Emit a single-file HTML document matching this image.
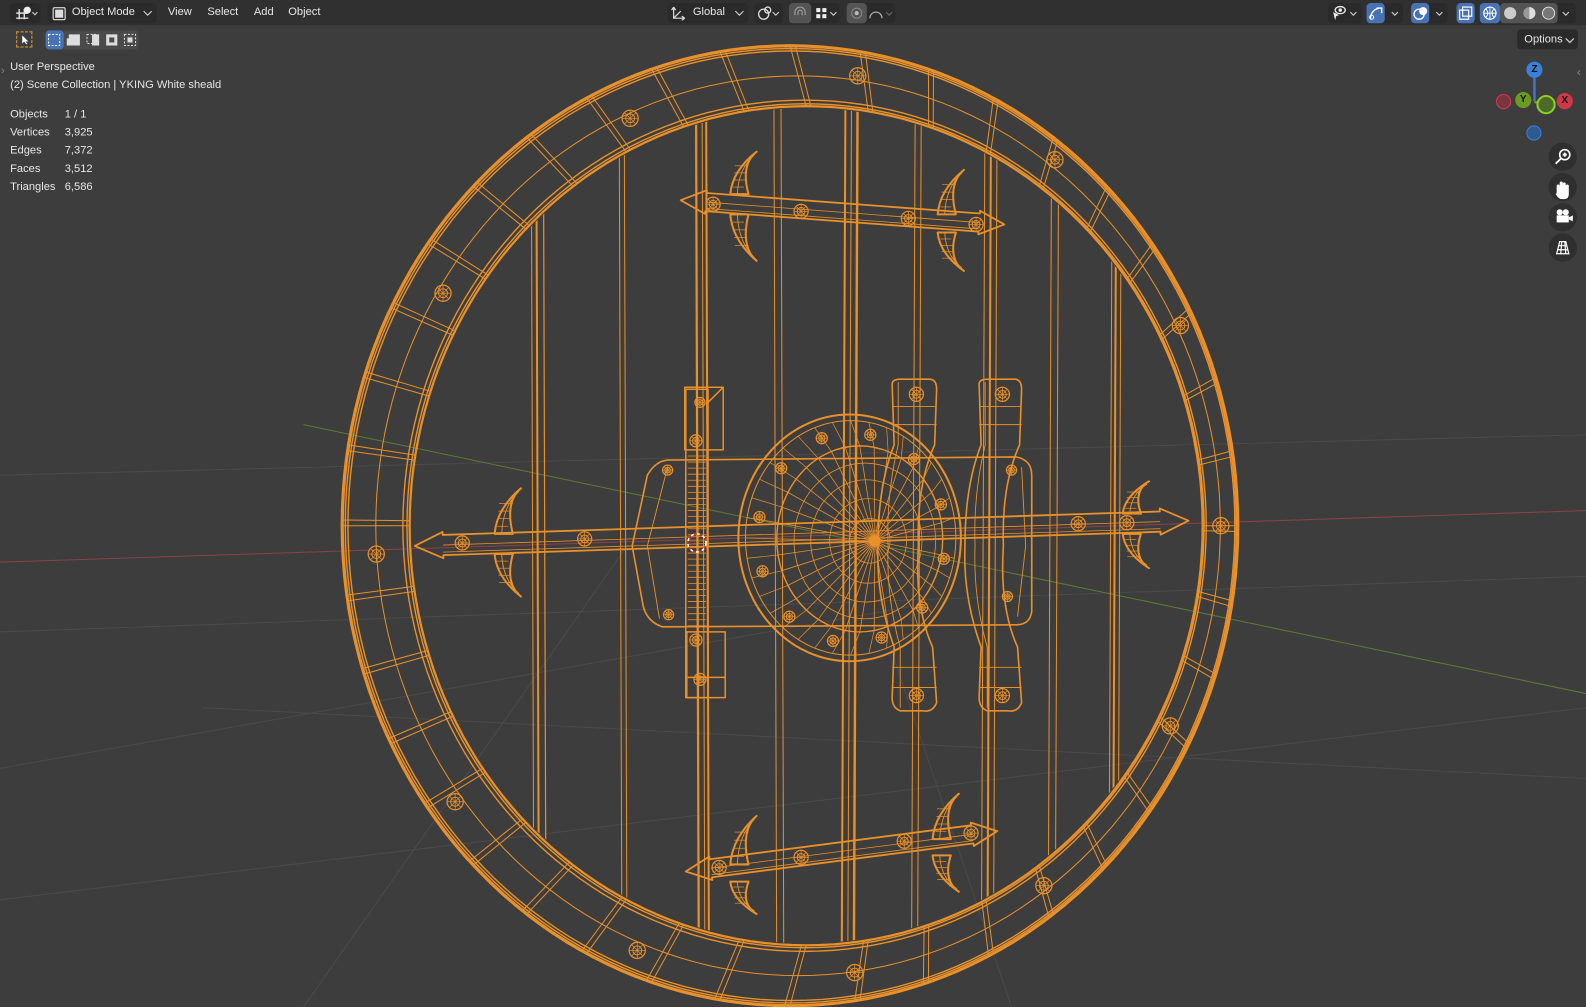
<!DOCTYPE html>
<html><head><meta charset="utf-8">
<style>
html,body{margin:0;padding:0;background:#3d3d3d;overflow:hidden;width:1586px;height:1007px}
#wrap{position:absolute;left:0;top:0;width:1568px;height:996px;transform:scale(1.01148,1.01104);transform-origin:0 0;background:#3d3d3d;font-family:"Liberation Sans","DejaVu Sans",sans-serif;font-size:11px;color:#e6e6e6}
#hdr{position:absolute;left:0;top:0;width:1568px;height:25px;background:#303030}
.t{position:absolute;white-space:nowrap}
.box{position:absolute;background:#2a2a2a;border-radius:4px;height:20px;top:3px}
.blue{background:#4772b3}
.gry{background:#545454}
.btn{position:absolute;border-radius:4px}
.nav{position:absolute;width:28px;height:28px;border-radius:50%;background:#2f2f2f;left:1531px}
.ball{position:absolute;border-radius:50%;text-align:center;font-size:10px;color:#111;font-weight:bold}
svg{position:absolute;left:0;top:0}
</style></head><body>
<div id="wrap">
<svg id="sv" width="1568" height="996" viewBox="0 0 1568 996">
<g id="grid" fill="none" stroke-width="1"></g>
<g id="shield" fill="none" stroke="#e8902a" stroke-width="1.5" stroke-linejoin="round"></g>
</svg>

<div id="hdr"></div>
<div class="box" style="left:10px;width:30px"></div>
<svg style="left:14px;top:5px" width="24" height="16" viewBox="0 0 24 16"><path d="M2 8h12M5 4v10M10 4v10M2 13h12" stroke="#ddd" stroke-width="1.4" fill="none"/><circle cx="13" cy="5" r="3.5" fill="#eee"/><path d="M18 7l2.5 2.5L23 7" stroke="#ccc" fill="none" stroke-width="1.2"/></svg>
<div class="box" style="left:47px;width:108px"></div>
<div style="position:absolute;left:52px;top:7px;width:11px;height:11px;border:1.5px solid #ddd;border-radius:2px;background:#ddd;box-shadow:inset 0 0 0 1.5px #2a2a2a"></div>
<div class="t" style="left:71px;top:6px">Object Mode</div>
<svg style="left:141px;top:9px" width="10" height="8"><path d="M1 2l4 4 4-4" stroke="#ccc" fill="none" stroke-width="1.2"/></svg>
<div class="t" style="left:166px;top:6px">View</div>
<div class="t" style="left:205px;top:6px">Select</div>
<div class="t" style="left:251px;top:6px">Add</div>
<div class="t" style="left:285px;top:6px">Object</div>
<div class="box" style="left:660px;width:80px"></div>
<svg style="left:663px;top:5px" width="16" height="16"><path d="M3 2v11h11M3 13l7-7M3 2l-2 3M3 2l2 3M14 13l-3-2M14 13l-3 2" stroke="#ddd" fill="none" stroke-width="1.2"/></svg>
<div class="t" style="left:685px;top:6px">Global</div>
<svg style="left:726px;top:9px" width="10" height="8"><path d="M1 2l4 4 4-4" stroke="#ccc" fill="none" stroke-width="1.2"/></svg>
<div class="box" style="left:746px;width:28px"></div>
<svg style="left:748px;top:5px" width="26" height="16"><circle cx="7" cy="9" r="5" stroke="#ddd" fill="none" stroke-width="1.3"/><circle cx="11" cy="5" r="3" stroke="#ddd" fill="none" stroke-width="1.3"/><path d="M16 7l3 3 3-3" stroke="#ccc" fill="none" stroke-width="1.2"/></svg>
<div class="box" style="left:780px;width:50px"></div>
<div class="btn gry" style="left:780px;top:3px;width:22px;height:20px"></div>
<svg style="left:782px;top:5px" width="48" height="16"><path d="M4 10V7a5 5 0 0 1 10 0v3M7 10V7a2 2 0 0 1 4 0v3" stroke="#999" fill="none" stroke-width="1.2"/><rect x="25" y="3" width="4" height="4" fill="#eee"/><rect x="31" y="3" width="4" height="4" fill="#eee"/><rect x="25" y="9" width="4" height="4" fill="#eee"/><rect x="31" y="9" width="4" height="4" fill="#eee"/><path d="M39 7l3 3 3-3" stroke="#ccc" fill="none" stroke-width="1.2"/></svg>
<div class="box" style="left:837px;width:48px"></div>
<div class="btn gry" style="left:837px;top:3px;width:20px;height:20px"></div>
<svg style="left:838px;top:5px" width="48" height="16"><circle cx="9" cy="8" r="5" stroke="#888" fill="none"/><circle cx="9" cy="8" r="2" fill="#bbb"/><path d="M22 13a6 6 0 0 1 12 0" stroke="#aaa" fill="none" stroke-width="1.3"/><path d="M38 7l3 3 3-3" stroke="#666" fill="none" stroke-width="1.2"/></svg>
<div class="box" style="left:1313px;width:33px"></div>
<svg style="left:1315px;top:4px" width="32" height="18"><ellipse cx="10" cy="6" rx="5" ry="3.5" stroke="#eee" fill="none" stroke-width="1.3"/><circle cx="10" cy="6" r="1.7" fill="#eee"/><path d="M3 8l6 3-3 1-1 4z" fill="#eee"/><path d="M20 8l3 3 3-3" stroke="#ccc" fill="none" stroke-width="1.2"/></svg>
<div class="box" style="left:1351px;width:36px"></div>
<div class="btn blue" style="left:1351px;top:3px;width:18px;height:20px"></div>
<svg style="left:1352px;top:5px" width="36" height="16"><path d="M3 13A10 10 0 0 1 13 3M9 3h5v5" stroke="#fff" fill="none" stroke-width="1.3"/><circle cx="4" cy="12" r="2" stroke="#fff" fill="none"/><path d="M24 7l3 3 3-3" stroke="#ccc" fill="none" stroke-width="1.2"/></svg>
<div class="box" style="left:1395px;width:36px"></div>
<div class="btn blue" style="left:1395px;top:3px;width:18px;height:20px"></div>
<svg style="left:1396px;top:5px" width="36" height="16"><circle cx="7" cy="9" r="5" stroke="#fff" fill="none" stroke-width="1.3"/><circle cx="11" cy="6" r="4" fill="#fff"/><path d="M24 7l3 3 3-3" stroke="#ccc" fill="none" stroke-width="1.2"/></svg>
<div class="btn blue" style="left:1440px;top:3px;width:18px;height:20px"></div>
<svg style="left:1441px;top:5px" width="16" height="16"><rect x="2" y="5" width="9" height="9" stroke="#fff" fill="none" stroke-width="1.2"/><rect x="5" y="2" width="9" height="9" stroke="#fff" fill="none" stroke-width="1.2"/></svg>
<div class="box" style="left:1463px;width:95px;background:#2a2a2a"></div>
<div class="btn blue" style="left:1463px;top:3px;width:20px;height:20px"></div>
<div class="btn" style="left:1483px;top:3px;width:57px;height:20px;background:#545454"></div>
<svg style="left:1464px;top:5px" width="94" height="16"><circle cx="9" cy="8" r="6" stroke="#fff" fill="none" stroke-width="1.2"/><path d="M3 8h12M9 2v12M5 4q4 4 0 8M13 4q-4 4 0 8" stroke="#fff" fill="none" stroke-width="0.9"/><circle cx="29" cy="8" r="6" fill="#ccc"/><circle cx="48" cy="8" r="6" fill="#999"/><path d="M48 2a6 6 0 0 1 0 12z" fill="#ddd"/><circle cx="67" cy="8" r="6" stroke="#ddd" fill="#777"/><path d="M81 7l3 3 3-3" stroke="#ccc" fill="none" stroke-width="1.2"/></svg>

<div style="position:absolute;left:16px;top:31px;width:14px;height:14px;border:1.5px dashed #e09a30"></div>
<svg style="left:19px;top:34px" width="10" height="10"><path d="M3 1v8l2-2 2 3 1-1-2-2h3z" fill="#fff"/></svg>
<div class="btn" style="left:45px;top:30px;width:92px;height:19px;background:#4a4a4a"></div>
<div class="btn blue" style="left:45px;top:30px;width:18px;height:19px"></div>
<svg style="left:45px;top:30px" width="92" height="19"><rect x="3" y="4" width="11" height="11" stroke="#fff" stroke-dasharray="2 1.5" fill="none"/><path d="M23 4h11v11h-13v-7h2z" fill="#ddd"/><rect x="41" y="4" width="9" height="9" stroke="#ddd" stroke-dasharray="2 1.5" fill="none"/><path d="M46 4h7v11h-7z" fill="#ddd"/><rect x="60" y="4" width="11" height="11" fill="#ddd"/><rect x="63" y="7" width="5" height="5" fill="#4a4a4a"/><rect x="78" y="4" width="11" height="11" stroke="#ddd" stroke-dasharray="2 1.5" fill="none"/><rect x="81" y="7" width="5" height="5" fill="#ddd"/></svg>
<div class="btn" style="left:1500px;top:29px;width:60px;height:20px;background:#2a2a2a"></div>
<div class="t" style="left:1507px;top:33px">Options</div>
<svg style="left:1547px;top:36px" width="10" height="8"><path d="M1 2l4 4 4-4" stroke="#ccc" fill="none" stroke-width="1.2"/></svg>

<div class="t" style="left:10px;top:60px">User Perspective</div>
<div class="t" style="left:10px;top:78px">(2) Scene Collection | YKING White sheald</div>
<div class="t" style="left:10px;top:107px">Objects</div><div class="t" style="left:64px;top:107px">1 / 1</div>
<div class="t" style="left:10px;top:125px">Vertices</div><div class="t" style="left:64px;top:125px">3,925</div>
<div class="t" style="left:10px;top:143px">Edges</div><div class="t" style="left:64px;top:143px">7,372</div>
<div class="t" style="left:10px;top:161px">Faces</div><div class="t" style="left:64px;top:161px">3,512</div>
<div class="t" style="left:10px;top:179px">Triangles</div><div class="t" style="left:64px;top:179px">6,586</div>
<div class="t" style="left:1px;top:64px;color:#888;font-size:11px">›</div>
<div class="t" style="left:1559px;top:64px;color:#888;font-size:12px">‹</div>

<svg style="left:1470px;top:55px" width="95" height="95"><line x1="47" y1="14" x2="47" y2="45" stroke="#3a78d0" stroke-width="2.5"/><line x1="47" y1="46" x2="68" y2="46" stroke="#d03848" stroke-width="2"/><line x1="47" y1="46" x2="58" y2="48" stroke="#7aaa20" stroke-width="2"/></svg>
<div class="ball" style="left:1509px;top:61px;width:16px;height:16px;line-height:16px;background:#3a80d8">Z</div>
<div class="ball" style="left:1479px;top:93px;width:13px;height:13px;background:#7a3440;border:1.5px solid #d8384a"></div>
<div class="ball" style="left:1498px;top:91px;width:16px;height:16px;line-height:16px;background:#6a9a20">Y</div>
<div class="ball" style="left:1519px;top:94px;width:15px;height:15px;background:#4e6a2a;border:2px solid #8ed020"></div>
<div class="ball" style="left:1539px;top:92px;width:16px;height:16px;line-height:16px;background:#d03848">X</div>
<div class="ball" style="left:1509px;top:124px;width:13px;height:13px;background:#2f5a90;border:1.5px solid #3a80d8"></div>
<div class="nav" style="top:141px"></div><div class="nav" style="top:171px"></div><div class="nav" style="top:201px"></div><div class="nav" style="top:231px"></div>
<svg style="left:1531px;top:141px" width="28" height="120"><circle cx="16" cy="12" r="5" stroke="#fff" fill="none" stroke-width="1.6"/><path d="M14 12h4M16 10v4M12 16l-5 5" stroke="#fff" stroke-width="1.8"/><path d="M8 50v-7a1.5 1.5 0 0 1 3 0v-3a1.5 1.5 0 0 1 3 0v1a1.5 1.5 0 0 1 3 0v2a1.5 1.5 0 0 1 3 0v8q0 5-5 5h-2q-3 0-6-5z" fill="#fff"/><circle cx="11" cy="69" r="3" fill="#fff"/><circle cx="17" cy="69" r="3" fill="#fff"/><rect x="8" y="72" width="12" height="7" fill="#fff"/><path d="M20 74l4-2v6l-4-2z" fill="#fff"/><path d="M8 110l3-12h6l3 12zM9 106h10M10 102h8M13 98l-1 12M16 98l1 12" stroke="#fff" fill="none" stroke-width="1.2"/></svg>
</div>

<script>
var NS="http://www.w3.org/2000/svg";
function el(p,t,a){var e=document.createElementNS(NS,t);for(var k in a)e.setAttribute(k,a[k]);p.appendChild(e);return e}
var G=document.getElementById('grid'),S=document.getElementById('shield');
[[0,470,1568,430],[0,625,1568,570],[0,890,1568,700],[200,700,1568,770],[0,760,900,600],[300,996,620,540],[1000,996,880,640]].forEach(function(l){el(G,'line',{x1:l[0],y1:l[1],x2:l[2],y2:l[3],stroke:'#4a4a4a'})});
el(G,'line',{x1:0,y1:556,x2:1568,y2:505,stroke:'#8a4248'});
el(G,'line',{x1:300,y1:420,x2:1568,y2:686,stroke:'#5d7a34'});
function P(cx,cy,rx,ry,t){return [cx+rx*Math.cos(t),cy+ry*Math.sin(t)]}
function O(t,f){var a=P(781,520,443,475,t),b=P(797,520,392,415,t);return [a[0]+(b[0]-a[0])*f,a[1]+(b[1]-a[1])*f]}
function ring(f,w){var d='';for(var i=0;i<=180;i++){var p=O(i/180*2*Math.PI,f);d+=(i?'L':'M')+p[0].toFixed(1)+' '+p[1].toFixed(1)}el(S,'path',{d:d+'Z','stroke-width':w||1.4})}
ring(0,2.6);ring(0.02,1.2);ring(0.05);ring(0.09);ring(0.5,1);ring(0.9);ring(0.96);ring(1,2.2);
for(var i=0;i<40;i++){var t=i/40*2*Math.PI;[0,0.012].forEach(function(dt){var a=O(t+dt,0),b=O(t+dt,1);el(S,'line',{x1:a[0],y1:a[1],x2:b[0],y2:b[1],'stroke-width':1})})}
var defs=el(document.getElementById('sv'),'defs',{});var cp=el(defs,'clipPath',{id:'ci'});el(cp,'ellipse',{cx:797,cy:520,rx:390,ry:413});
var PL=el(S,'g',{'clip-path':'url(#ci)'});
[[525,1],[530,2],[537,1.2],[612,1],[617,1],[688,2.2],[694,1],[698,2],[765,1],[772,1],[836,2],[842,1],[848,2.4],[905,1],[911,1],[974,1],[980,2],[986,1],[1040,1],[1047,1],[1100,1],[1104,2],[1109,1]].forEach(function(v){el(PL,'line',{x1:v[0],y1:60,x2:v[0]+ (v[0]>800?-4:3),y2:990,'stroke-width':v[1]})});
function rivet(x,y,r){r=r||8;el(S,'circle',{cx:x,cy:y,r:r,'stroke-width':1.2});el(S,'circle',{cx:x,cy:y,r:r*0.55,'stroke-width':1});for(var k=0;k<8;k++){var a=k*Math.PI/4;el(S,'line',{x1:x,y1:y,x2:x+r*Math.cos(a),y2:y+r*Math.sin(a),'stroke-width':0.7})}}
[[623,117],[438,290],[372,548],[450,793],[630,940],[845,962],[1032,876],[1157,718],[1207,520],[1167,322],[1043,158],[848,75]].forEach(function(p){rivet(p[0],p[1])});
function bar(x1,y1,x2,y2,w,tip){var dx=x2-x1,dy=y2-y1,L=Math.hypot(dx,dy),ux=dx/L,uy=dy/L,nx=-uy*w/2,ny=ux*w/2;
 var a=[x1+ux*tip,y1+uy*tip],b=[x2-ux*tip,y2-uy*tip];
 var d='M'+x1+' '+y1+'L'+(a[0]+nx*1.3)+' '+(a[1]+ny*1.3)+'L'+(a[0]+nx)+' '+(a[1]+ny)+'L'+(b[0]+nx)+' '+(b[1]+ny)+'L'+(b[0]+nx*1.3)+' '+(b[1]+ny*1.3)+'L'+x2+' '+y2+'L'+(b[0]-nx*1.3)+' '+(b[1]-ny*1.3)+'L'+(b[0]-nx)+' '+(b[1]-ny)+'L'+(a[0]-nx)+' '+(a[1]-ny)+'L'+(a[0]-nx*1.3)+' '+(a[1]-ny*1.3)+'Z';
 el(S,'path',{d:d,'stroke-width':1.8});el(S,'line',{x1:a[0],y1:a[1],x2:b[0],y2:b[1],'stroke-width':0.8});
 el(S,'path',{d:'M'+(a[0]+nx*0.7)+' '+(a[1]+ny*0.7)+'L'+(b[0]+nx*0.7)+' '+(b[1]+ny*0.7),'stroke-width':0.8})}
bar(410,540,1175,515,20,28);bar(673,198,993,222,18,25);bar(678,862,986,822,18,25);
function hook(x,y,dir,h){var ty=y+dir*h;var d='M'+(x-8)+' '+y+'Q'+(x-6)+' '+(y+dir*h*0.55)+' '+(x+18)+' '+ty+'Q'+(x+2)+' '+(y+dir*h*0.7)+' '+(x+10)+' '+y+'Z';
 el(S,'path',{d:d,'stroke-width':2});el(S,'path',{d:'M'+(x-1)+' '+y+'Q'+(x)+' '+(y+dir*h*0.6)+' '+(x+16)+' '+(ty-dir*3),'stroke-width':0.9});
 for(var k=1;k<5;k++){var yy=y+dir*h*k/6;el(S,'line',{x1:x-6+k*0.6,y1:yy,x2:x+4+k*1.5,y2:yy,'stroke-width':0.7})}}
hook(497,528,-1,45);hook(497,548,1,42);hook(1118,508,-1,32);hook(1118,528,1,34);
hook(730,192,-1,42);hook(730,212,1,46);hook(935,212,-1,44);hook(935,230,1,38);
hook(730,855,-1,48);hook(730,872,1,32);hook(930,830,-1,45);hook(930,846,1,36);
[[705,202],[792,209],[898,216],[965,222],[457,537],[578,533],[1066,518],[1114,517],[711,858],[792,848],[894,832],[960,824]].forEach(function(p){rivet(p[0],p[1],7)});
el(S,'path',{d:'M660 455L1005 452Q1020 455 1020 470L1020 605Q1018 618 1005 618L655 620Q640 615 636 600L625 540L640 470Q648 456 660 455Z','stroke-width':1.6});
el(S,'path',{d:'M660 462L640 540L652 612M1010 462L1014 540L1006 610','stroke-width':0.9});
el(S,'rect',{x:678,y:385,width:22,height:305,'stroke-width':1.5});
for(var y=445;y<625;y+=6)el(S,'line',{x1:680,y1:y,x2:698,y2:y,'stroke-width':0.8});
el(S,'path',{d:'M677 383h38v62h-38zM698 383l17-0M698 400l17-17M717 625v65h-38v-65zM680 670h37','stroke-width':1.5});
rivet(692,398,5);rivet(688,436,6);rivet(688,633,6);rivet(692,672,6);rivet(660,465,5);rivet(661,608,5);rivet(1000,465,5);rivet(996,590,5);
function handle(x0,w){el(S,'path',{d:'M'+x0+' 380Q'+x0+' 375 '+(x0+8)+' 375L'+(x0+w-6)+' 375Q'+(x0+w)+' 376 '+(x0+w)+' 385L'+(x0+w-2)+' 440Q'+(x0+w-20)+' 480 '+(x0+w-18)+' 540Q'+(x0+w-22)+' 600 '+(x0+w-4)+' 640L'+(x0+w)+' 695Q'+(x0+w-4)+' 705 '+(x0+w-14)+' 703L'+(x0+8)+' 703Q'+x0+' 700 '+x0+' 690L'+(x0+2)+' 640Q'+(x0-16)+' 590 '+(x0-14)+' 540Q'+(x0-14)+' 480 '+(x0+2)+' 440Z','stroke-width':1.6});
 el(S,'path',{d:'M'+(x0+6)+' 378L'+(x0+6)+' 440Q'+(x0-6)+' 490 '+(x0-4)+' 540Q'+(x0-6)+' 590 '+(x0+8)+' 640L'+(x0+8)+' 700M'+x0+' 402h'+w+'M'+x0+' 420h'+w+'M'+x0+' 660h'+w+'M'+x0+' 680h'+w,'stroke-width':0.9});
 rivet(x0+w/2+2,390,7);rivet(x0+w/2+2,688,7)}
handle(882,44);handle(968,42);
el(S,'ellipse',{cx:840,cy:532,rx:110,ry:122,'stroke-width':2});
el(S,'ellipse',{cx:841,cy:532,rx:104,ry:116,'stroke-width':1});
el(S,'ellipse',{cx:850,cy:533,rx:82,ry:92,'stroke-width':1.4});
for(var k=0;k<36;k++){var a=k/36*2*Math.PI;var p=P(850,533,82,92,a),q=P(841,532,104,116,a);el(S,'line',{x1:865,y1:535,x2:p[0],y2:p[1],'stroke-width':0.8});el(S,'line',{x1:p[0],y1:p[1],x2:q[0],y2:q[1],'stroke-width':0.7})}
[20,38,55,70].forEach(function(r){el(S,'ellipse',{cx:862-r*0.1,cy:535,rx:r,ry:r*1.1,'stroke-width':0.8})});
for(var k=0;k<12;k++){var a=k/12*2*Math.PI+0.2;var p=P(842,532,93,104,a);rivet(p[0],p[1],5.5)}
el(S,'circle',{cx:865,cy:535,r:5,fill:'#e8902a'});
el(S,'circle',{cx:689,cy:537,r:9,stroke:'#fff','stroke-width':1.5,'stroke-dasharray':'3 3',fill:'none'});
el(S,'circle',{cx:689,cy:537,r:9,stroke:'#d03030','stroke-width':1.5,'stroke-dasharray':'3 3','stroke-dashoffset':3,fill:'none'});
</script>
</body></html>
